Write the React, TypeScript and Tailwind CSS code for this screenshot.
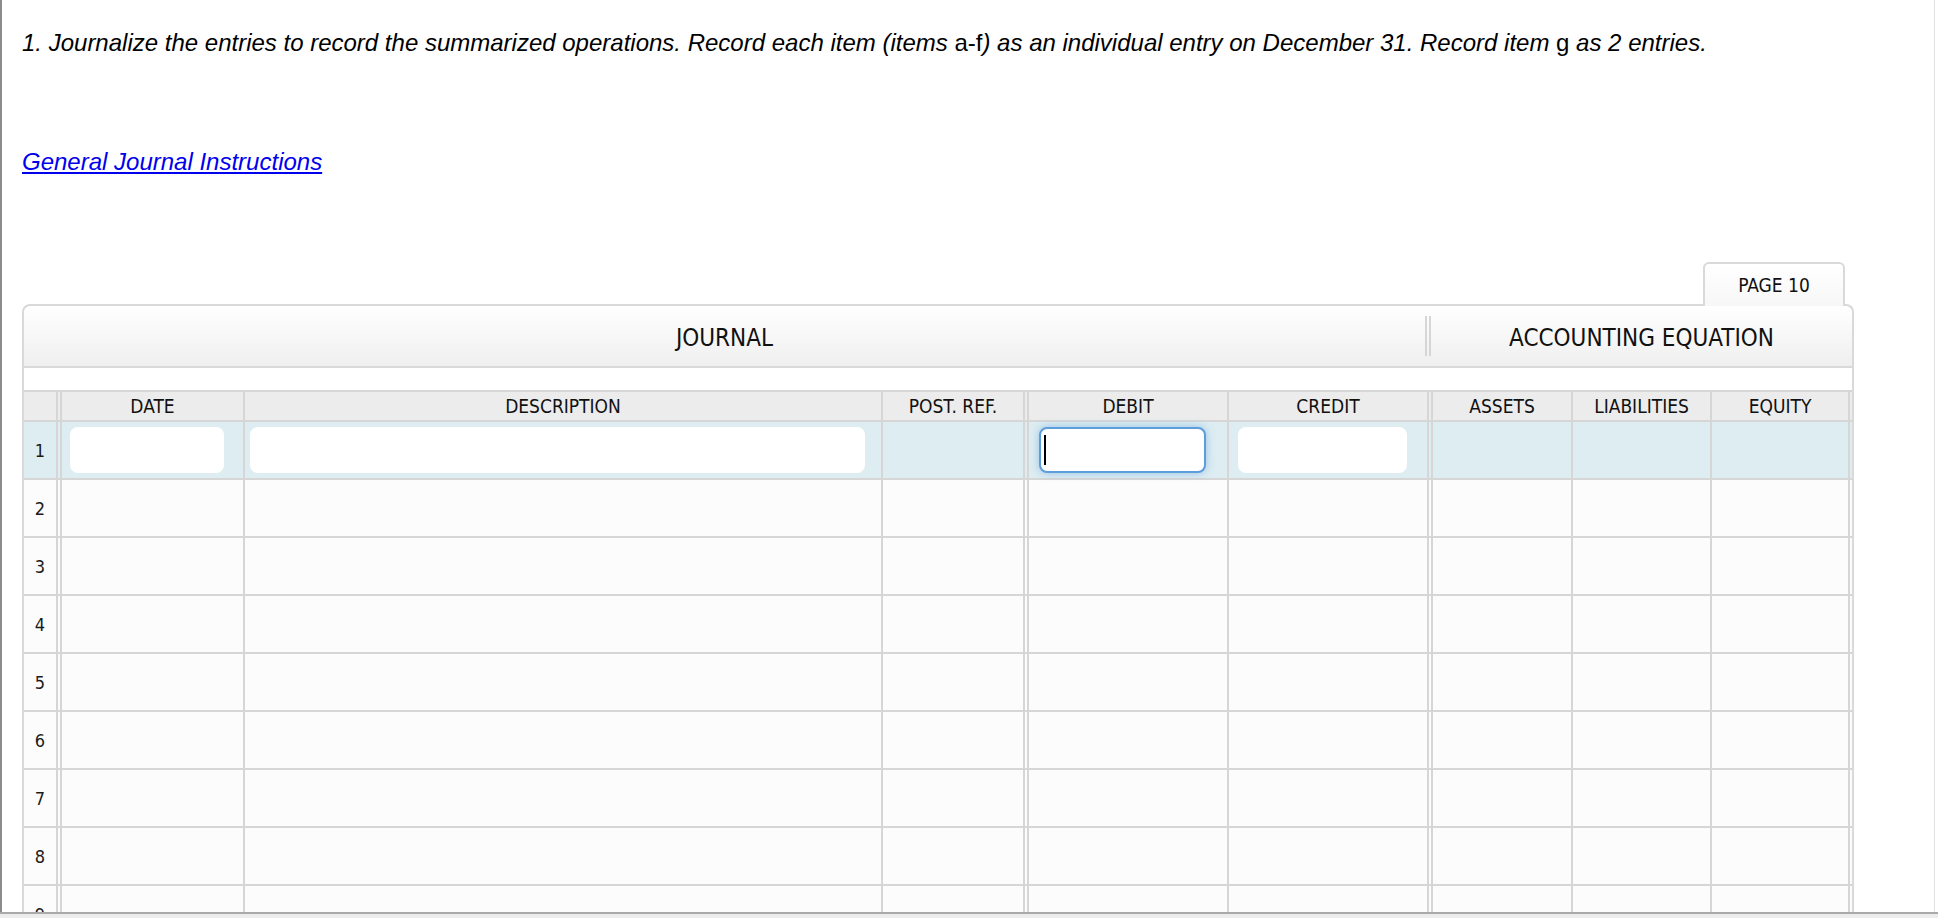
import React from "react";

const cond = { fontFamily: '"DejaVu Sans Condensed", "DejaVu Sans", sans-serif' };

function Sep({ bg }: { bg: string }) {
  return <div className={`w-[6px] shrink-0 border-x-2 border-[#d6d6d6] ${bg}`} />;
}

function EndSep({ bg }: { bg: string }) {
  return <div className={`w-[4px] shrink-0 border-l-2 border-[#d6d6d6] ${bg}`} />;
}

function HeaderRow() {
  const cell = "flex items-center justify-center border-r-2 border-[#d6d6d6] shrink-0";
  return (
    <div className="flex h-[32px] bg-[#ececec] border-y-2 border-[#d6d6d6] text-[19px] text-[#111]" style={cond}>
      <div className="w-[32px] shrink-0" />
      <Sep bg="bg-[#ececec]" />
      <div className={`${cell} w-[183px]`}>DATE</div>
      <div className={`${cell} w-[638px]`}>DESCRIPTION</div>
      <div className="flex items-center justify-center shrink-0 w-[140px]">POST. REF.</div>
      <Sep bg="bg-[#ececec]" />
      <div className={`${cell} w-[200px]`}>DEBIT</div>
      <div className="flex items-center justify-center shrink-0 w-[198px]">CREDIT</div>
      <Sep bg="bg-[#ececec]" />
      <div className={`${cell} w-[140px]`}>ASSETS</div>
      <div className={`${cell} w-[139px]`}>LIABILITIES</div>
      <div className="flex items-center justify-center shrink-0 w-[136px]">EQUITY</div>
      <EndSep bg="bg-[#ececec]" />
    </div>
  );
}

function Row({ n }: { n: number }) {
  const active = n === 1;
  const bg = active ? "bg-[#ddedf2]" : "bg-[#fcfcfc]";
  const cell = "flex items-center border-r-2 border-[#d6d6d6] shrink-0 h-full";
  return (
    <div className={`flex h-[58px] border-b-2 border-[#d6d6d6] ${bg}`}>
      <div className="w-[32px] shrink-0 flex items-center justify-center text-[18px] text-[#1a1a1a]" style={cond}>
        {n}
      </div>
      <Sep bg={bg} />
      <div className={`${cell} w-[183px]`}>
        {active && <div className="ml-[8px] w-[154px] h-[46px] rounded-lg bg-white" />}
      </div>
      <div className={`${cell} w-[638px]`}>
        {active && <div className="ml-[5px] w-[615px] h-[46px] rounded-lg bg-white" />}
      </div>
      <div className="shrink-0 w-[140px] h-full" />
      <Sep bg={bg} />
      <div className={`${cell} w-[200px]`}>
        {active && (
          <div className="ml-[10px] w-[167px] h-[46px] rounded-lg bg-white border-2 border-[#5e9ddb] shadow-[0_0_8px_rgba(94,157,219,0.55)] flex items-center pl-[3px]">
            <div className="w-[2px] h-[30px] bg-black" />
          </div>
        )}
      </div>
      <div className="flex items-center shrink-0 w-[198px] h-full">
        {active && <div className="ml-[9px] w-[169px] h-[46px] rounded-lg bg-white" />}
      </div>
      <Sep bg={bg} />
      <div className={`${cell} w-[140px]`} />
      <div className={`${cell} w-[139px]`} />
      <div className="shrink-0 w-[136px] h-full" />
      <EndSep bg={bg} />
    </div>
  );
}

export default function App() {
  const rows = [1, 2, 3, 4, 5, 6, 7, 8, 9, 10];
  return (
    <div className="h-[918px] w-[1938px] overflow-hidden bg-white flex flex-col">
      <div className="h-[912px] w-[1935px] border-l-2 border-[#8c8c8c] border-r border-r-[#e2e2e2] overflow-hidden">
        <div className="pl-[20px] pt-[29px]">
          <p className="text-[24px] italic text-black leading-[28px]" style={{ fontFamily: '"Liberation Sans", Arial, sans-serif' }}>
            1. Journalize the entries to record the summarized operations. Record each item (items{" "}
            <span className="not-italic">a-f</span>) as an individual entry on December 31. Record item{" "}
            <span className="not-italic">g</span> as 2 entries.
          </p>
          <a
            href="#"
            className="block mt-[91px] w-fit text-[24px] italic text-[#0000ee] underline leading-[28px]"
            style={{ fontFamily: '"Liberation Sans", Arial, sans-serif' }}
          >
            General Journal Instructions
          </a>
        </div>

        <div className="ml-[20px] mt-[86px] w-[1832px]">
          <div className="flex justify-end pr-[9px]">
            <div
              className="w-[142px] h-[44px] -mb-[2px] rounded-t-md border-2 border-b-0 border-[#d9d9d9] bg-gradient-to-b from-white to-[#f7f7f7] flex items-center justify-center text-[19px] text-[#111] relative"
              style={cond}
            >
              PAGE 10
            </div>
          </div>
          <div className="border-2 border-b-0 border-[#d9d9d9] rounded-t-lg">
            <div className="flex h-[62px] rounded-t-lg bg-gradient-to-b from-white to-[#efefef] border-b-2 border-[#d9d9d9] text-[24px] text-[#111]" style={cond}>
              <div className="w-[1401px] flex items-center justify-center pt-[3px]">JOURNAL</div>
              <div className="my-[10px] w-[6px] border-x-2 border-[#d6d6d6]" />
              <div className="flex-1 flex items-center justify-center pt-[3px]">ACCOUNTING EQUATION</div>
            </div>
            <div className="h-[22px] bg-white" />
            <HeaderRow />
            {rows.map((n) => (
              <Row key={n} n={n} />
            ))}
          </div>
        </div>
      </div>
      <div className="h-[6px] border-t-2 border-[#a9a9a9] bg-[#ececec]" />
    </div>
  );
}
